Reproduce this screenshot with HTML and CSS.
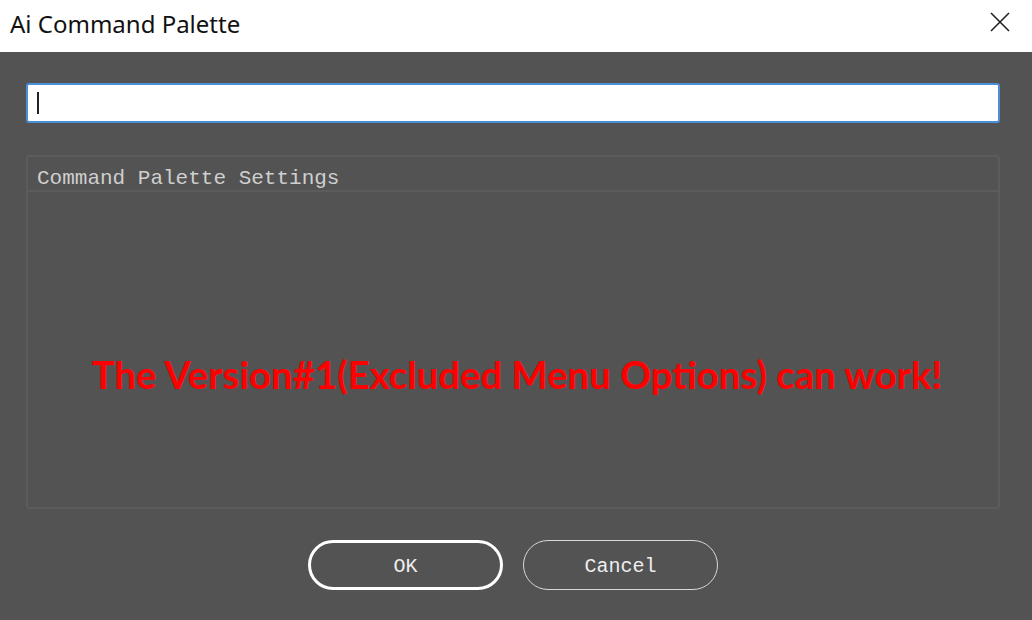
FILE: index.html
```html
<!DOCTYPE html>
<html>
<head>
<meta charset="utf-8">
<link rel="stylesheet" href="styles.css">
</head>
<body>
<div class="window">
  <div class="titlebar">
    <span class="title">Ai Command Palette</span>
    <svg class="close" width="20" height="20" viewBox="0 0 20 20"><path d="M1 1 L19 19 M19 1 L1 19" stroke="#222" stroke-width="1.6" fill="none"/></svg>
  </div>
  <div class="body">
    <div class="input"><span class="caret"></span></div>
    <div class="panel">
      <div class="panel-head">Command Palette Settings</div>
      <div class="panel-content">
        <div class="note">The Version#1(Excluded Menu Options) can work!</div>
      </div>
    </div>
    <div class="buttons">
      <div class="btn btn-ok">OK</div>
      <div class="btn btn-cancel">Cancel</div>
    </div>
  </div>
</div>
</body>
</html>
```
FILE: styles.css
```css
html, body { margin: 0; padding: 0; }
body { width: 1032px; height: 620px; overflow: hidden; background: #535353; }
.window { display: flex; flex-direction: column; height: 620px; }
.titlebar {
  height: 52px; background: #fff; display: flex; align-items: center;
  justify-content: space-between; padding: 0 22px 0 10px; box-sizing: border-box;
}
.title { font-family: "Noto Sans", sans-serif; font-size: 24px; color: #111; margin-top: -6px; }
.close { margin-top: -8px; }
.body { flex: 1; background: #535353; padding: 31px 32px 0 26px; display: flex; flex-direction: column; }
.input {
  height: 40px; box-sizing: border-box; background: #fff; border: 2px solid #4a8fd8;
  border-radius: 3px; display: flex; align-items: center; padding-left: 9px;
}
.caret { width: 2px; height: 22px; background: #222; }
.panel {
  margin-top: 32px; height: 354px; box-sizing: border-box; border: 2px solid #5c5c5c;
  border-radius: 4px; display: flex; flex-direction: column;
}
.panel-head {
  height: 35px; box-sizing: border-box; border-bottom: 2px solid #5c5c5c;
  font-family: "Liberation Mono", monospace; font-size: 21px; color: #cfcfcf;
  padding: 9px 0 0 9px; line-height: 26px;
}
.panel-content { flex: 1; display: flex; align-items: center; justify-content: center; }
.note {
  font-family: Lato, "Open Sans", sans-serif; font-weight: bold; font-size: 38.3px;
  color: #ff0000; margin-top: 48px; margin-left: 8px;
}
.buttons { display: flex; justify-content: center; gap: 20px; margin-top: 31px; }
.btn {
  width: 195px; height: 50px; box-sizing: border-box; border-radius: 25px;
  display: flex; align-items: center; justify-content: center;
  font-family: "Liberation Mono", monospace; font-size: 20px; color: #eee;
  padding-top: 3px;
}
.btn-ok { border: 3px solid #fff; }
.btn-cancel { border: 1.5px solid #d8d8d8; }
```
